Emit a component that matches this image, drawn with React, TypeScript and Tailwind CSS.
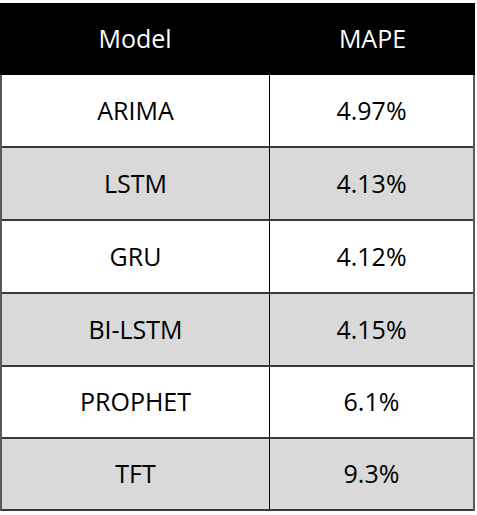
import React from "react";

const rows: [string, string, string][] = [
  ["ARIMA", "4.97%", "h-[73px] bg-white"],
  ["LSTM", "4.13%", "h-[73px] bg-[#d9d9d9]"],
  ["GRU", "4.12%", "h-[73px] bg-white"],
  ["BI-LSTM", "4.15%", "h-[73px] bg-[#d9d9d9]"],
  ["PROPHET", "6.1%", "h-[72px] bg-white"],
  ["TFT", "9.3%", "h-[72px] bg-[#d9d9d9]"],
];

export default function App() {
  return (
    <div
      className="w-[477px] h-[515px] bg-white pt-[3px]"
      style={{ fontFamily: '"Open Sans", "Noto Sans", sans-serif' }}
    >
      <div className="w-[475px]">
        <div className="grid grid-cols-[270px_1fr] h-[72px] bg-black text-white text-[25px]">
          <div className="flex items-center justify-center">Model</div>
          <div className="flex items-center justify-center">MAPE</div>
        </div>
        <div className="border-l-2 border-r-2 border-[#595959]">
          {rows.map(([m, v, cls]) => (
            <div
              key={m}
              className={`grid grid-cols-[268px_1fr] border-b-2 border-[#3a3a3a] text-[25px] text-black ${cls}`}
            >
              <div className="flex items-center justify-center border-r border-black">{m}</div>
              <div className="flex items-center justify-center">{v}</div>
            </div>
          ))}
        </div>
      </div>
    </div>
  );
}
